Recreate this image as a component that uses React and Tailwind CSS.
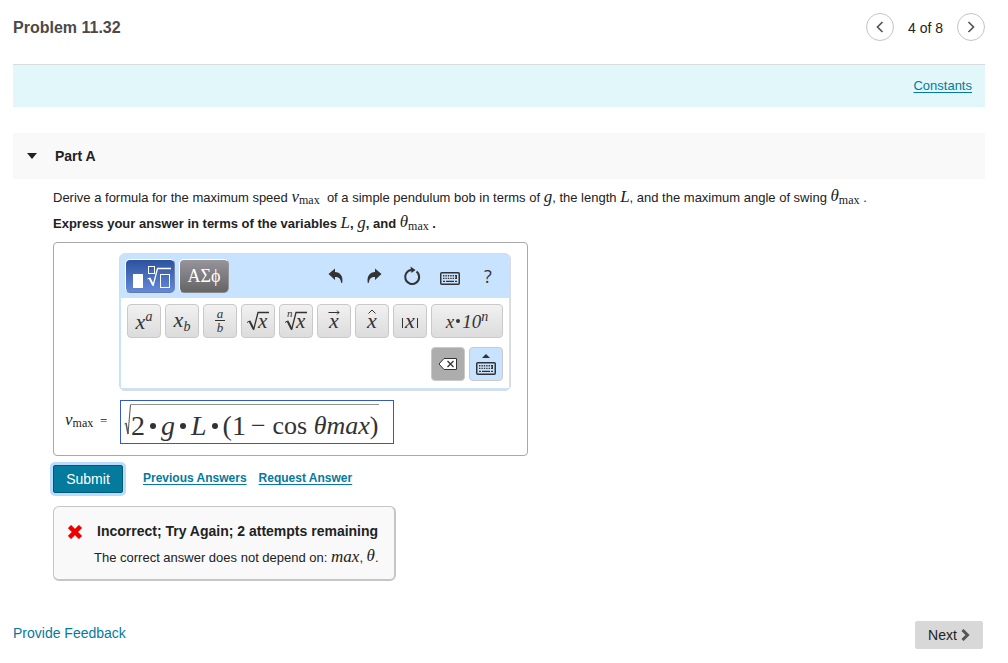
import React from "react";

const serif = "font-['Liberation_Serif',serif]";

function Max() {
  return <span className="not-italic align-[-2px] text-[12px]">max</span>;
}

function Var({ children, sub = false, raised = false }) {
  return (
    <span className="font-['Liberation_Serif',serif] font-normal italic leading-none whitespace-nowrap text-[17px]">
      <span className={raised ? "align-[1px]" : ""}>{children}</span>
      {sub && <Max />}
    </span>
  );
}

function Radical({ index }) {
  return (
    <svg width="28" height="30" viewBox="0 0 28 30" fill="none" stroke="#333" className="shrink-0" aria-hidden="true">
      <path d="M3 16.500L5.500 15" strokeWidth="1" />
      <path d="M5.500 15L9.500 23" strokeWidth="2" />
      <path d="M9.500 24L14 6.500H25" strokeWidth="1.300" />
      <text x="14" y="22" fill="#333" stroke="none" fontSize="21" fontStyle="italic" fontFamily="Liberation Serif">x</text>
      {index && <text x="5" y="11" fill="#333" stroke="none" fontSize="11" fontStyle="italic" fontFamily="Liberation Serif">n</text>}
    </svg>
  );
}

function Accent({ d }) {
  return (
    <svg width="20" height="30" viewBox="0 0 20 30" fill="none" stroke="#333" className="shrink-0" aria-hidden="true">
      <path d={d} strokeWidth="1" />
      <text x="5" y="22" fill="#333" stroke="none" fontSize="22" fontStyle="italic" fontFamily="Liberation Serif">x</text>
    </svg>
  );
}

function Key({ label, wide = false, children }) {
  return (
    <button
      type="button"
      aria-label={label}
      className={`${serif} flex h-[34px] items-center justify-center rounded border border-[#c9c9c9] bg-linear-to-b from-[#f1f1f1] to-[#dcdcdc] text-[22px] leading-none text-[#333] italic ${wide ? "w-[72px]" : "w-[34px]"}`}
    >
      {children}
    </button>
  );
}

function Keyboard() {
  return (
    <svg width="20" height="13" viewBox="0 0 20 13" fill="none" stroke="#333" aria-hidden="true">
      <rect x="0.75" y="0.75" width="18.5" height="11.5" rx="1" strokeWidth="1.5" />
      <path d="M3 3.700h14M3 6.400h14" strokeWidth="1.400" strokeDasharray="1.400 1" />
      <path d="M16.300 3v4" strokeWidth="1.400" />
      <path d="M3 9.400h2M6 9.400h8M15 9.400h2" strokeWidth="1.400" />
    </svg>
  );
}

function Tool({ label, children }) {
  return (
    <button type="button" aria-label={label} className="flex h-[34px] w-[38px] items-center justify-center text-[#333]">
      {children}
    </button>
  );
}

function Toolbar() {
  return (
    <div className="flex h-11 items-center justify-between pr-0.5 pl-1">
      <div className="flex gap-1">
        <button type="button" aria-label="Templates" className="flex h-[34px] w-[50px] items-center justify-center rounded-[5px] border border-t-white border-l-white border-r-[#7085b5] border-b-[#68799f] bg-linear-to-b from-[#2c529f] to-[#6389d8]">
          <svg width="44" height="28" viewBox="0 0 44 28" fill="none" stroke="#fff" aria-hidden="true">
            <rect x="5" y="12" width="10" height="14" fill="#fff" stroke="none" />
            <rect x="20.500" y="4.500" width="6" height="7" />
            <path d="M19.500 17l2-1" />
            <path d="M21.500 16l3.500 7" strokeWidth="2" />
            <path d="M25 24L29.500 6.500H43" strokeWidth="1.300" />
            <rect x="32.500" y="12.500" width="9" height="13" />
          </svg>
        </button>
        <button type="button" aria-label="Symbols" className={`${serif} flex h-[34px] w-[50px] items-center justify-center rounded-[5px] border border-t-white border-l-white border-r-[#999] border-b-[#888] bg-linear-to-b from-[#97949b] to-[#656565] text-[18px] leading-none text-white`}>
          ΑΣϕ
        </button>
      </div>
      <div className="flex">
        <Tool label="Undo">
          <svg width="16" height="16" viewBox="0 0 16 16" fill="currentColor" aria-hidden="true">
            <path d="M0.500 6L7 0.500V4C12 4 15.500 8 14.200 15H13.300C12.500 10.500 11 9 7 9V12Z" />
          </svg>
        </Tool>
        <Tool label="Redo">
          <svg width="16" height="16" viewBox="0 0 16 16" fill="currentColor" aria-hidden="true">
            <path d="M15.500 6L9 0.500V4C4 4 0.500 8 1.800 15H2.700C3.500 10.500 5 9 9 9V12Z" />
          </svg>
        </Tool>
        <Tool label="Reset">
          <svg width="18" height="20" viewBox="0 0 18 20" fill="none" stroke="currentColor" aria-hidden="true">
            <path d="M13.500 5.500A7 7 0 1 1 8.500 4" strokeWidth="2" />
            <path d="M7.500 0.500L12.500 4L8.500 7Z" fill="currentColor" stroke="none" />
          </svg>
        </Tool>
        <Tool label="Keyboard shortcuts">
          <span className="pt-1"><Keyboard /></span>
        </Tool>
        <Tool label="Help">
          <span className="font-['Open_Sans',sans-serif] text-[18px] leading-none">?</span>
        </Tool>
      </div>
    </div>
  );
}

function MathPanel() {
  return (
    <div className="w-[392px] rounded-md border border-[#d8dce0] bg-[#c8e3ff] px-px pb-0.5">
      <Toolbar />
      <div className="flex flex-col gap-[9px] bg-white px-1.5 pt-1.5 pb-[7px]">
        <div className="flex gap-1">
          <Key label="Superscript"><span>x<span className="align-[8px] text-[14px]">a</span></span></Key>
          <Key label="Subscript"><span>x<span className="align-[-4px] text-[14px]">b</span></span></Key>
          <Key label="Fraction">
            <span className="flex flex-col items-center text-[13px] leading-[12px]">
              <span className="border-b border-[#333] px-0.5">a</span>
              <span className="pt-px">b</span>
            </span>
          </Key>
          <Key label="Square root"><Radical /></Key>
          <Key label="Nth root"><Radical index /></Key>
          <Key label="Vector"><Accent d="M4.500 6.500H15M13 4.500L15 6.500L13 8.500" /></Key>
          <Key label="Unit vector"><Accent d="M6.500 7.500L10 4L13.500 7.500" /></Key>
          <Key label="Absolute value">
            <span className="flex items-center gap-0.5 pt-1">
              <span className="h-2.5 w-px bg-[#333]" />
              <span className="pb-1">x</span>
              <span className="h-2.5 w-px bg-[#333]" />
            </span>
          </Key>
          <Key label="Scientific notation" wide>
            <span className="flex items-center text-[19px]">x<span className="mx-0.5 size-1 rounded-full bg-[#333]" />10<span className="pb-2 text-[14px]">n</span></span>
          </Key>
        </div>
        <div className="flex justify-end gap-1">
          <button type="button" aria-label="Delete" className="flex h-[34px] w-[34px] items-center justify-center rounded border border-[#c9c9c9] bg-[#adadad]">
            <svg width="20" height="12" viewBox="0 0 20 12" fill="none" stroke="#333" aria-hidden="true">
              <path d="M6 0.500H18.500V11.500H6L1 6Z" fill="#fff" />
              <path d="M9.500 3l6 6M15.500 3l-6 6" strokeWidth="1.300" />
            </svg>
          </button>
          <button type="button" aria-label="Show keyboard" className="flex h-[34px] w-[34px] flex-col items-center justify-center gap-1 rounded border border-[#c9c9c9] bg-[#c8e3ff]">
            <svg width="8" height="4" viewBox="0 0 8 4" fill="#333" aria-hidden="true"><path d="M0 4L4 0L8 4Z" /></svg>
            <Keyboard />
          </button>
        </div>
      </div>
    </div>
  );
}

function Dot() {
  return <span className="size-1.5 rounded-full bg-[#333]" />;
}

function AnswerField() {
  return (
    <div
      role="textbox"
      aria-labelledby="answer-label"
      tabIndex={0}
      className={`${serif} flex h-11 w-[274px] items-start border border-[#3459c4] pt-[3px] pl-[3px] text-[#333]`}
    >
      <svg width="7" height="33" viewBox="0 0 7 33" fill="none" stroke="#555" className="shrink-0" aria-hidden="true">
        <path d="M0.500 20L2 19" />
        <path d="M2 19L4 30" strokeWidth="1.500" />
        <path d="M4 30L6.500 0.500" />
      </svg>
      <div className="flex h-10 items-center gap-[5px] border-t border-[#958f95] pt-0.5 text-[28px] leading-none whitespace-nowrap">
        <span>2</span>
        <Dot />
        <i>g</i>
        <Dot />
        <i>L</i>
        <Dot />
        <span>(1</span>
        <span className="text-[26px]">−</span>
        <span className="pl-0.5 text-[26px]">cos <i>θmax</i>)</span>
      </div>
    </div>
  );
}

function Circle({ label, d }) {
  return (
    <button type="button" aria-label={label} className="flex size-7 items-center justify-center rounded-full border border-[#c4c4c4]">
      <svg width="8" height="12" viewBox="0 0 8 12" fill="none" stroke="#555" strokeWidth="1.700" aria-hidden="true"><path d={d} /></svg>
    </button>
  );
}

export default function App() {
  return (
    <main className="bg-white pr-[23px] pb-3 pl-[13px] font-['Liberation_Sans',Arial,sans-serif] text-[13px] text-[#222]">
      <header className="flex items-center justify-between pt-[13px] pb-[23px]">
        <h1 className="pt-0.5 text-[16px] font-bold text-[#4a4a4a]">Problem 11.32</h1>
        <nav aria-label="Problems" className="flex items-center gap-3.5 text-[14px]">
          <Circle label="Previous problem" d="M6.500 1L1.500 6L6.500 11" />
          <span className="pt-0.5">4 of 8</span>
          <Circle label="Next problem" d="M1.500 1L6.500 6L1.500 11" />
        </nav>
      </header>

      <div className="flex h-[43px] items-center justify-end border-t border-[#d9dcdc] bg-[#e1f7fa] pr-[13px]">
        <a href="#constants" className="text-[#047a9c] underline underline-offset-2">Constants</a>
      </div>

      <h2 className="mt-[26px] flex h-[46px] items-center bg-[#f9f9f9] text-[14px] font-bold">
        <button type="button" aria-expanded="true" className="flex items-center gap-[18px] pl-3.5">
          <svg width="10" height="6" viewBox="0 0 10 6" fill="#222" aria-hidden="true"><path d="M0 0H10L5 6Z" /></svg>
          Part A
        </button>
      </h2>

      <section className="pt-1.5 pl-10">
        <p className="leading-[26px]">
          Derive a formula for the maximum speed <Var sub>v</Var>&nbsp; of a simple pendulum bob in terms of <Var>g</Var>, the length <Var>L</Var>, and the maximum angle of swing <Var sub raised>θ</Var> .
        </p>
        <p className="leading-[26px] font-bold">
          Express your answer in terms of the variables <Var>L</Var>, <Var>g</Var>, and <Var sub raised>θ</Var> .
        </p>

        <div className="mt-[5px] w-[475px] rounded border border-[#a9a9a9] pt-2.5 pb-[11px]">
          <div className="pl-[65px]"><MathPanel /></div>
          <div className="flex items-center pt-[9px]">
            <div id="answer-label" className="w-[66px] shrink-0 pb-0.5 pl-[11px]"><Var sub>v</Var> <span className={serif}>&nbsp;=</span></div>
            <AnswerField />
          </div>
        </div>

        <div className="mt-[9px] flex h-7 items-center text-[12px] font-bold text-[#047a9c]">
          <button type="button" className="mr-5 h-7 w-[70px] rounded-xs border border-[#005a76] bg-[#047a9c] text-[14px] font-normal text-white ring-3 ring-[#b8dcff]">Submit</button>
          <span className="flex gap-3 pb-0.5">
            <a href="#previous" className="underline underline-offset-2">Previous Answers</a>
            <a href="#request" className="underline underline-offset-2">Request Answer</a>
          </span>
        </div>

        <div role="status" className="mt-[13px] h-[75px] w-[343px] rounded-md border border-r-2 border-b-2 border-[#c6c6c6] bg-[#f9f9f9] pt-3">
          <div className="flex h-[25px] items-center gap-3.5 pl-3.5 text-[14px] font-bold">
            <svg width="15" height="14" viewBox="0 0 15 14" fill="none" stroke="#ee0000" strokeWidth="4.500" aria-hidden="true"><path d="M1.500 1.500L12.500 12.500M12.500 1.500L1.500 12.500" /></svg>
            Incorrect; Try Again; 2 attempts remaining
          </div>
          <p className="pl-10 leading-[28px]">The correct answer does not depend on: <Var>max</Var>, <Var raised>θ</Var>.</p>
        </div>
      </section>

      <footer className="mt-10 flex items-center justify-between pr-0.5 text-[14px]">
        <a href="#feedback" className="pb-1 text-[#047a9c]">Provide Feedback</a>
        <button type="button" className="flex h-7 w-[68px] items-center justify-center gap-1 rounded-xs bg-[#d8d8d8]">
          Next
          <svg width="9" height="12" viewBox="0 0 9 12" fill="none" stroke="#555" strokeWidth="3" aria-hidden="true"><path d="M1.500 1L6.500 6L1.500 11" /></svg>
        </button>
      </footer>
    </main>
  );
}
